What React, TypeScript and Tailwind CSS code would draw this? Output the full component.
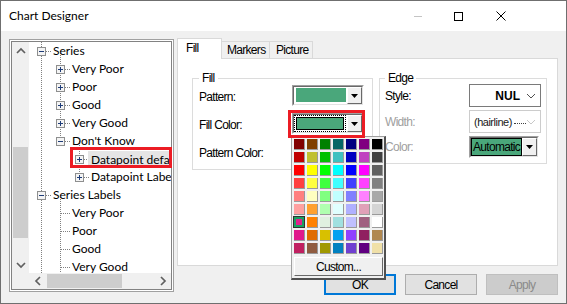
import React from 'react';

const UI = "[font-family:'Liberation_Sans',Arial,sans-serif]";
const SEGOE = "[font-family:Lato,'Noto_Sans',sans-serif]";

type TreeRow = { label: string; pad: string; box?: 'plus' | 'minus'; selected?: boolean };

const treeRows: TreeRow[] = [
  { label: 'Series', pad: 'pl-[8px]', box: 'minus' },
  { label: 'Very Poor', pad: 'pl-[27px]', box: 'plus' },
  { label: 'Poor', pad: 'pl-[27px]', box: 'plus' },
  { label: 'Good', pad: 'pl-[27px]', box: 'plus' },
  { label: 'Very Good', pad: 'pl-[27px]', box: 'plus' },
  { label: "Don't Know", pad: 'pl-[27px]', box: 'minus' },
  { label: 'Datapoint defaults', pad: 'pl-[46px]', box: 'plus', selected: true },
  { label: 'Datapoint Labels', pad: 'pl-[46px]', box: 'plus' },
  { label: 'Series Labels', pad: 'pl-[8px]', box: 'minus' },
  { label: 'Very Poor', pad: 'pl-[43px]' },
  { label: 'Poor', pad: 'pl-[43px]' },
  { label: 'Good', pad: 'pl-[43px]' },
  { label: 'Very Good', pad: 'pl-[43px]' },
];

const palette = [
  ['#800000', '#804000', '#008000', '#056666', '#000080', '#800080', '#000000'],
  ['#c00000', '#c0c030', '#00c000', '#40c0c0', '#0000c0', '#c040c0', '#404040'],
  ['#ff0000', '#ffff00', '#00ff00', '#00ffff', '#0000ff', '#ff00ff', '#606060'],
  ['#ff4040', '#ffff40', '#40ff40', '#40ffff', '#4040ff', '#ff40ff', '#808080'],
  ['#ff8080', '#ffffc0', '#80ff80', '#c0ffff', '#8080ff', '#ff80ff', '#a8a8a8'],
  ['#ffa0a0', '#ffa030', '#b0ffb0', '#e0ffff', '#b0b0ff', '#e0a0b8', '#d4d4d4'],
  ['#e0208c', '#ff8000', '#e0f0e0', '#a0e0e0', '#c0c0ff', '#a06080', '#ffffff'],
  ['#e0188c', '#e06c00', '#d8c000', '#00a0f0', '#9040ff', '#902060', '#b08850'],
  ['#c02060', '#905c40', '#a09800', '#0080c0', '#7040d0', '#600080', '#f0e0a8'],
];

function PlusMinus({ kind }: { kind: 'plus' | 'minus' }) {
  return (
    <svg width="9" height="9" viewBox="0 0 9 9" className="block shrink-0 mt-[5px] mr-[7px]">
      <rect x="0.5" y="0.5" width="8" height="8" fill="#f4f4f4" stroke="#8e8f8f" />
      <path d="M2 4.5h5" stroke="#1e3c78" />
      {kind === 'plus' && <path d="M4.5 2v5" stroke="#1e3c78" />}
    </svg>
  );
}

function Chevron({ dir }: { dir: 'up' | 'down' | 'left' | 'right' }) {
  const d = {
    up: 'M1 6 L5 2 L9 6',
    down: 'M1 2 L5 6 L9 2',
    left: 'M6 1 L2 5 L6 9',
    right: 'M2 1 L6 5 L2 9',
  }[dir];
  const wide = dir === 'up' || dir === 'down';
  return (
    <svg width={wide ? 10 : 8} height={wide ? 8 : 10} viewBox={wide ? '0 0 10 8' : '0 0 8 10'} className="block">
      <path d={d} fill="none" stroke="#606060" strokeWidth="1.7" />
    </svg>
  );
}

function TreeLines() {
  const vl = (x: number, y1: number, y2: number) => (
    <line key={`v${x}-${y1}`} x1={x + 0.5} y1={y1} x2={x + 0.5} y2={y2} />
  );
  const hl = (y: number, x1: number, x2: number) => (
    <line key={`h${y}-${x1}`} x1={x1} y1={y + 0.5} x2={x2} y2={y + 0.5} />
  );
  return (
    <svg className="absolute left-0 top-0" width="142" height="231" stroke="#808080" strokeDasharray="1 1" fill="none">
      {vl(12, 0, 231)}
      {hl(9, 17, 23)}
      {hl(153, 17, 23)}
      {vl(31, 9, 100)}
      {[27, 45, 63, 81, 99].map((y) => hl(y, 36, 42))}
      {vl(50, 99, 136)}
      {[117, 135].map((y) => hl(y, 55, 61))}
      {vl(31, 153, 231)}
      {[171, 189, 207, 225].map((y) => hl(y, 32, 42))}
    </svg>
  );
}

function Tree() {
  return (
    <div className="w-[165px] h-[253px] shrink-0 border border-[#a0a0a0] bg-white p-px">
      <div className="w-full h-full border border-[#828282] flex">
        <div className="w-[17px] flex flex-col bg-[#f0f0f0] shrink-0">
          <div className="h-[17px] flex items-center justify-center"><Chevron dir="up" /></div>
          <div className="flex-1">
            <div className="mt-[88px] h-[91px] mx-px bg-[#cdcdcd]" />
          </div>
          <div className="h-[17px] flex items-center justify-center"><Chevron dir="down" /></div>
          <div className="h-[16px]" />
        </div>
        <div className="flex-1 min-w-0 flex flex-col">
          <div className={`relative flex-1 overflow-hidden ${SEGOE} text-[12px] tracking-normal text-black`}>
            <TreeLines />
            <div className="relative">
              {treeRows.map((r, i) => (
                <div key={i} className={`h-[18px] flex whitespace-nowrap ${r.pad}`}>
                  {r.box && <PlusMinus kind={r.box} />}
                  {r.selected ? (
                    <span className="leading-[17px] h-[17px] mt-px bg-[#e5e5e5] pl-[3px] -ml-[3px] pr-[4px]">{r.label}</span>
                  ) : (
                    <span className="leading-[18px]">{r.label}</span>
                  )}
                </div>
              ))}
            </div>
          </div>
          <div className="h-[16px] flex bg-[#f0f0f0] shrink-0">
            <div className="w-[17px] flex items-center justify-center"><Chevron dir="left" /></div>
            <div className="flex-1 py-px">
              <div className="ml-px w-[75px] h-full bg-[#cdcdcd]" />
            </div>
            <div className="w-[17px] flex items-center justify-center"><Chevron dir="right" /></div>
          </div>
        </div>
      </div>
    </div>
  );
}

function DownTriangle() {
  return (
    <svg width="7" height="4" viewBox="0 0 7 4" className="block">
      <path d="M0 0 H7 L3.5 4 Z" fill="#000" />
    </svg>
  );
}

function RaisedButton() {
  return (
    <div className="w-[15px] h-full border border-t-white border-l-white border-r-[#696969] border-b-[#696969] bg-[#f0f0f0] flex items-center justify-center shrink-0">
      <DownTriangle />
    </div>
  );
}

function Sunken({ className, children }: { className: string; children: React.ReactNode }) {
  return (
    <div className={`border border-t-[#a0a0a0] border-l-[#a0a0a0] border-r-white border-b-white ${className}`}>
      <div className="w-full h-full border border-t-[#696969] border-l-[#696969] border-r-[#e3e3e3] border-b-[#e3e3e3] bg-white flex">
        {children}
      </div>
    </div>
  );
}

function ThinChevron({ color }: { color: string }) {
  return (
    <svg width="10" height="6" viewBox="0 0 10 6" className="block">
      <path d="M1 1 L5 5 L9 1" fill="none" stroke={color} strokeWidth="1" />
    </svg>
  );
}

export default function App() {
  const green = 'bg-[#4aa77b]';
  return (
    <div className={`relative w-[567px] h-[304px] bg-[#f0f0f0] border border-[#6f6f6f] flex flex-col overflow-hidden ${UI} text-[12px] tracking-[-0.7px] leading-[14px] text-black`}>
      {/* title bar */}
      <div className="h-[30px] bg-white flex items-center shrink-0">
        <span className={`pl-[8px] text-[12px] tracking-normal ${SEGOE}`}>Chart Designer</span>
        <div className="flex-1" />
        <div className="w-[8px] h-px bg-[#c4c4c4]" />
        <div className="ml-[32px] w-[9px] h-[9px] border border-black" />
        <svg className="ml-[33px] mr-[60px] block" width="10" height="10" viewBox="0 0 10 10">
          <path d="M0.5 0.5 L9.5 9.5 M9.5 0.5 L0.5 9.5" stroke="#000" strokeWidth="1" />
        </svg>
      </div>

      {/* body */}
      <div className="flex pl-[8px] pt-[8px]">
        <Tree />

        <div className="ml-[3px] -mt-px w-[381px] flex flex-col shrink-0">
          {/* tabs */}
          <div className="flex items-end h-[20px]">
            <div className="relative z-10 w-[45px] h-[21px] -mb-px bg-white border border-b-0 border-[#d9d9d9] pl-[8px] pt-[2px]">Fill</div>
            <div className="w-[48px] h-[17px] border border-l-0 border-b-0 border-[#d9d9d9] pl-[5px] pt-px">Markers</div>
            <div className="w-[43px] h-[17px] border border-l-0 border-b-0 border-[#d9d9d9] pl-[6px] pt-px">Picture</div>
          </div>

          {/* tab page */}
          <div className="h-[208px] bg-white border border-[#d9d9d9] pl-[14px] pt-[19px] flex items-start gap-[6px]">
            {/* Fill group */}
            <div className="relative w-[181px] h-[92px] border border-[#dcdcdc] pl-[6px] pr-[8px] pt-[6px] flex flex-col gap-[7px]">
              <span className="absolute -top-[8px] left-[6px] px-[3px] bg-white">Fill</span>
              <div className="h-[21px] flex items-center justify-between">
                <span className="pt-[3px]">Pattern:</span>
                <Sunken className="w-[72px] h-[21px]">
                  <div className={`flex-1 my-[1px] ml-[2px] mr-[1px] mb-[2px] ${green}`} />
                  <RaisedButton />
                </Sunken>
              </div>
              <div className="h-[21px] flex items-center justify-between">
                <span className="pt-[3px]">Fill Color:</span>
                <Sunken className="w-[72px] h-[21px]">
                  <div className="flex-1 border border-dotted border-black p-px mr-px">
                    <div className={`w-full h-full border border-black ${green}`} />
                  </div>
                  <RaisedButton />
                </Sunken>
              </div>
              <div className="h-[21px] flex items-center">
                <span className="pt-[3px]">Pattern Color:</span>
              </div>
            </div>

            {/* Edge group */}
            <div className="relative w-[168px] h-[86px] border border-[#dcdcdc] pl-[5px] pr-[5px] pt-[5px] flex flex-col gap-[3px]">
              <span className="absolute -top-[8px] left-[5px] px-[3px] bg-white">Edge</span>
              <div className="h-[23px] flex items-center justify-between">
                <span>Style:</span>
                <div className="w-[72px] h-[23px] bg-white border border-[#7a7a7a] flex items-center justify-end pr-[4px] gap-[6px]">
                  <span className="font-bold text-[12px] tracking-normal">NUL</span>
                  <ThinChevron color="#505050" />
                </div>
              </div>
              <div className="h-[23px] flex items-center justify-between text-[#a0a0a0]">
                <span>Width:</span>
                <div className="w-[72px] h-[23px] bg-white border border-[#cccccc] flex items-center pl-[4px] pr-[4px]">
                  <span className="text-[11px] tracking-[-0.5px] text-[#202020]">(hairline)</span>
                  <span className="ml-[2px] w-[12px] border-b border-dotted border-[#404040] mt-[3px]" />
                  <div className="flex-1" />
                  <ThinChevron color="#c8c8c8" />
                </div>
              </div>
              <div className="h-[22px] flex items-center justify-between text-[#a0a0a0] pr-[2px]">
                <span>Color:</span>
                <Sunken className="w-[70px] h-[22px]">
                  <div className={`flex-1 min-w-0 overflow-hidden border border-black ${green} text-black leading-[16px] pl-px whitespace-nowrap`}>Automatic</div>
                  <RaisedButton />
                </Sunken>
              </div>
            </div>
          </div>

          {/* buttons */}
          <div className="mt-[8px] flex justify-end gap-[9px]">
            <button className="w-[72px] h-[21px] border-2 border-[#0078d7] bg-[#e1e1e1] leading-[14px]">OK</button>
            <button className="w-[72px] h-[21px] border border-[#adadad] bg-[#e1e1e1] leading-[14px]">Cancel</button>
            <button className="w-[72px] h-[21px] border border-[#bfbfbf] bg-[#cccccc] text-[#8a8a8a] leading-[14px]">Apply</button>
          </div>
        </div>
      </div>

      {/* colour dropdown */}
      <div className="absolute left-[290px] top-[135px] w-[95px] bg-[#f0f0f0] border border-[#a0a0a0] border-r-2 border-b-2 border-r-[#505050] border-b-[#505050] pl-[2px] pr-px pt-[2px] pb-[2px]">
        <div className="grid grid-cols-[repeat(7,11px)] gap-[2px]">
          {palette.flatMap((row, r) =>
            row.map((c, ci) => {
              const sel = r === 6 && ci === 0;
              return (
                <div key={`${r}-${ci}`} className="w-[11px] h-[11px] border-r border-b border-[#9a9a9a]">
                  <div
                    className={sel ? 'w-full h-full border-2 border-[#18a060] outline outline-1 outline-[#303030]' : 'w-full h-full'}
                    style={{ backgroundColor: c }}
                  />
                </div>
              );
            })
          )}
        </div>
        <div className="mt-[3px] h-[19px] border border-t-white border-l-white border-r-[#696969] border-b-[#696969] bg-[#f0f0f0] flex items-center justify-center">
          Custom...
        </div>
      </div>

      {/* red highlight boxes */}
      <div className="absolute left-[69px] top-[146px] w-[102px] h-[21px] border-[3px] border-[#ec1c24]" />
      <div className="absolute left-[287px] top-[109px] w-[77px] h-[28px] border-[3px] border-[#ec1c24]" />
    </div>
  );
}
